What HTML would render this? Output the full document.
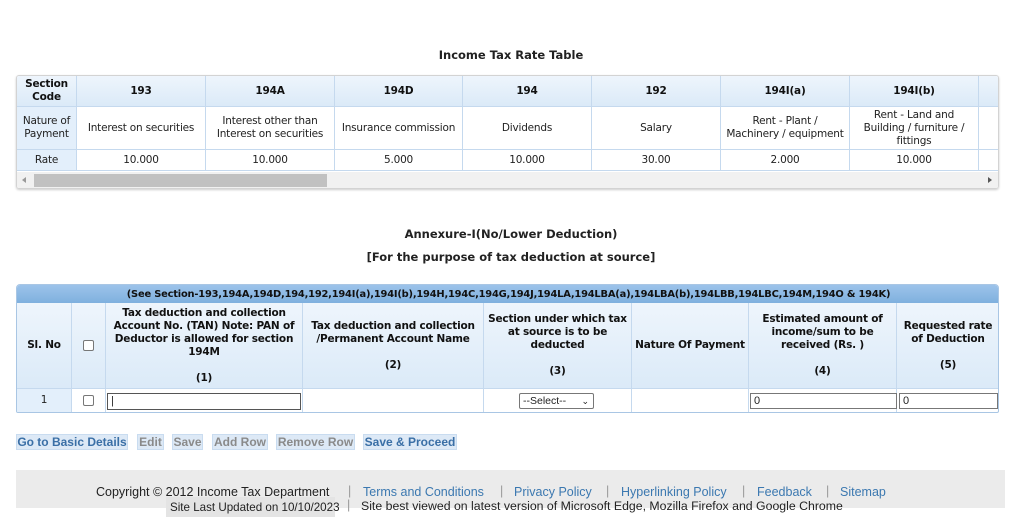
<!DOCTYPE html>
<html><head><meta charset="utf-8"><style>
*{margin:0;padding:0;box-sizing:border-box}
body{width:1024px;height:517px;background:#fff;position:relative;overflow:hidden;font-family:"DejaVu Sans","Liberation Sans",sans-serif;color:#222}
.a{position:absolute}
.c{position:absolute;display:flex;align-items:center;justify-content:center;text-align:center;font-size:10.5px;line-height:13px;letter-spacing:-0.2px}
.h{background:linear-gradient(#eef5fc,#dbeaf8);font-weight:bold;color:#111}
.lb{background:#e3effb}
.b{border-right:1px solid #c5d9ee;border-bottom:1px solid #c5d9ee}
.t{font-weight:bold;font-size:11px;color:#222}
.btn{position:absolute;top:434px;height:16px;background:#dde9f6;border:1px solid #c9dcf0;font-family:"Liberation Sans",sans-serif;font-weight:bold;font-size:12px;line-height:14px;text-align:center;color:#3a6fa6}
.dis{color:#8a8a8a}
.cb{width:11px;height:11px;border:1px solid #777;border-radius:2px;background:#fff}
.inp{position:absolute;height:16px;border:1px solid #777;background:#fff;font-family:"Liberation Sans",sans-serif;font-size:11px;line-height:14px;padding-left:3px}
.f{font-family:"Liberation Sans",sans-serif;font-size:12.5px;position:absolute;white-space:nowrap}
</style></head><body>
<div class="a t" style="left:0;width:1022px;top:48px;text-align:center;font-size:11.5px">Income Tax Rate Table</div>

<div class="a" style="left:16px;top:75px;width:983px;height:114px;border:1px solid #d3d3d3;border-radius:3px;box-shadow:0 1px 2px #ccc;overflow:hidden">
<div class="c h b" style="left:0;top:0;width:60px;height:31px">Section<br>Code</div>
<div class="c h b" style="left:60px;top:0;width:129px;height:31px">193</div>
<div class="c h b" style="left:189px;top:0;width:129px;height:31px">194A</div>
<div class="c h b" style="left:318px;top:0;width:128px;height:31px">194D</div>
<div class="c h b" style="left:446px;top:0;width:129px;height:31px">194</div>
<div class="c h b" style="left:575px;top:0;width:129px;height:31px">192</div>
<div class="c h b" style="left:704px;top:0;width:129px;height:31px">194I(a)</div>
<div class="c h b" style="left:833px;top:0;width:129px;height:31px">194I(b)</div>
<div class="c h b" style="left:962px;top:0;width:21px;height:31px"></div>
<div class="c lb b" style="left:0;top:31px;width:60px;height:43px">Nature of<br>Payment</div>
<div class="c b" style="left:60px;top:31px;width:129px;height:43px">Interest on securities</div>
<div class="c b" style="left:189px;top:31px;width:129px;height:43px">Interest other than<br>Interest on securities</div>
<div class="c b" style="left:318px;top:31px;width:128px;height:43px">Insurance commission</div>
<div class="c b" style="left:446px;top:31px;width:129px;height:43px">Dividends</div>
<div class="c b" style="left:575px;top:31px;width:129px;height:43px">Salary</div>
<div class="c b" style="left:704px;top:31px;width:129px;height:43px">Rent - Plant /<br>Machinery / equipment</div>
<div class="c b" style="left:833px;top:31px;width:129px;height:43px">Rent - Land and<br>Building / furniture /<br>fittings</div>
<div class="c b" style="left:962px;top:31px;width:21px;height:43px"></div>
<div class="c lb b" style="left:0;top:74px;width:60px;height:21px">Rate</div>
<div class="c b" style="left:60px;top:74px;width:129px;height:21px">10.000</div>
<div class="c b" style="left:189px;top:74px;width:129px;height:21px">10.000</div>
<div class="c b" style="left:318px;top:74px;width:128px;height:21px">5.000</div>
<div class="c b" style="left:446px;top:74px;width:129px;height:21px">10.000</div>
<div class="c b" style="left:575px;top:74px;width:129px;height:21px">30.00</div>
<div class="c b" style="left:704px;top:74px;width:129px;height:21px">2.000</div>
<div class="c b" style="left:833px;top:74px;width:129px;height:21px">10.000</div>
<div class="c b" style="left:962px;top:74px;width:21px;height:21px"></div>
<div class="a" style="left:0;top:96px;width:983px;height:17px;background:#f1f1f1"></div>
<div class="a" style="left:17px;top:98px;width:293px;height:13px;background:#c1c1c1"></div>
<div class="a" style="left:5px;top:101px;border-right:4px solid #999;border-top:3px solid transparent;border-bottom:3px solid transparent"></div>
<div class="a" style="left:971px;top:101px;border-left:4px solid #555;border-top:3px solid transparent;border-bottom:3px solid transparent"></div>
</div>

<div class="a t" style="left:0;width:1022px;top:227px;text-align:center;font-size:11.5px">Annexure-I(No/Lower Deduction)</div>
<div class="a t" style="left:0;width:1022px;top:250px;text-align:center;font-size:11.5px">[For the purpose of tax deduction at source]</div>

<div class="a" style="left:16px;top:284px;width:983px;height:129px;border:1px solid #a9c6e4;border-radius:4px 4px 2px 2px;overflow:hidden;background:#fff">
<div class="c" style="left:0;top:0;width:983px;height:18px;background:linear-gradient(#9cc3ea,#7fb0de);font-weight:bold;color:#111;font-size:9.9px">(See Section-193,194A,194D,194,192,194I(a),194I(b),194H,194C,194G,194J,194LA,194LBA(a),194LBA(b),194LBB,194LBC,194M,194O &amp; 194K)</div>
<div class="c h b" style="left:0;top:18px;width:55px;height:86px">Sl. No</div>
<div class="c h b" style="left:55px;top:18px;width:34px;height:86px"><div class="cb"></div></div>
<div class="c h b" style="left:89px;top:18px;width:197px;height:86px;flex-direction:column">Tax deduction and collection<br>Account No. (TAN) Note: PAN of<br>Deductor is allowed for section<br>194M<br><br>(1)</div>
<div class="c h b" style="left:286px;top:18px;width:181px;height:86px">Tax deduction and collection<br>/Permanent Account Name<br><br>(2)</div>
<div class="c h b" style="left:467px;top:18px;width:148px;height:86px">Section under which tax<br>at source is to be<br>deducted<br><br>(3)</div>
<div class="c h b" style="left:615px;top:18px;width:117px;height:86px">Nature Of Payment</div>
<div class="c h b" style="left:732px;top:18px;width:148px;height:86px">Estimated amount of<br>income/sum to be<br>received (Rs. )<br><br>(4)</div>
<div class="c h b" style="left:880px;top:18px;width:103px;height:86px">Requested rate<br>of Deduction<br><br>(5)</div>
<div class="c lb b" style="left:0;top:104px;width:55px;height:24px">1</div>
<div class="c b" style="left:55px;top:104px;width:34px;height:24px"><div class="cb"></div></div>
<div class="c b" style="left:89px;top:104px;width:197px;height:24px"></div>
<div class="c b" style="left:286px;top:104px;width:181px;height:24px"></div>
<div class="c b" style="left:467px;top:104px;width:148px;height:24px"></div>
<div class="c b" style="left:615px;top:104px;width:117px;height:24px"></div>
<div class="c b" style="left:732px;top:104px;width:148px;height:24px"></div>
<div class="c b" style="left:880px;top:104px;width:103px;height:24px"></div>
</div>
<div class="inp" style="left:107px;top:393px;width:194px;height:17px;border-color:#555">|</div>
<div class="inp" style="left:519px;top:393px;width:75px;border-radius:2px;font-size:10.5px">--Select--<span style="position:absolute;right:4px;top:0;font-size:9px">&#8964;</span></div>
<div class="inp" style="left:750px;top:393px;width:147px">0</div>
<div class="inp" style="left:899px;top:393px;width:99px">0</div>

<div class="btn" style="left:16px;width:112px">Go to Basic Details</div>
<div class="btn dis" style="left:137px;width:27px">Edit</div>
<div class="btn dis" style="left:172px;width:31px">Save</div>
<div class="btn dis" style="left:212px;width:56px">Add Row</div>
<div class="btn dis" style="left:276px;width:79px">Remove Row</div>
<div class="btn" style="left:363px;width:94px">Save &amp; Proceed</div>

<div class="a" style="left:16px;top:470px;width:989px;height:38px;background:#ebebeb"></div>
<div class="a" style="left:166px;top:497px;width:169px;height:20px;background:#e4e4e4"></div>
<div class="f" style="left:96px;top:485px;color:#222">Copyright © 2012 Income Tax Department</div>
<div class="f" style="left:348px;top:484px;color:#999">|</div>
<div class="f" style="left:363px;top:485px;color:#3b78b0">Terms and Conditions</div>
<div class="f" style="left:500px;top:484px;color:#999">|</div>
<div class="f" style="left:514px;top:485px;color:#3b78b0">Privacy Policy</div>
<div class="f" style="left:606px;top:484px;color:#999">|</div>
<div class="f" style="left:621px;top:485px;color:#3b78b0">Hyperlinking Policy</div>
<div class="f" style="left:742px;top:484px;color:#999">|</div>
<div class="f" style="left:757px;top:485px;color:#3b78b0">Feedback</div>
<div class="f" style="left:826px;top:484px;color:#999">|</div>
<div class="f" style="left:840px;top:485px;color:#3b78b0">Sitemap</div>
<div class="f" style="left:170px;top:501px;font-size:11.6px;color:#222">Site Last Updated on 10/10/2023</div>
<div class="f" style="left:347px;top:498px;color:#999">|</div>
<div class="f" style="left:361px;top:499px;color:#222;font-size:12.3px">Site best viewed on latest version of Microsoft Edge, Mozilla Firefox and Google Chrome</div>
</body></html>
